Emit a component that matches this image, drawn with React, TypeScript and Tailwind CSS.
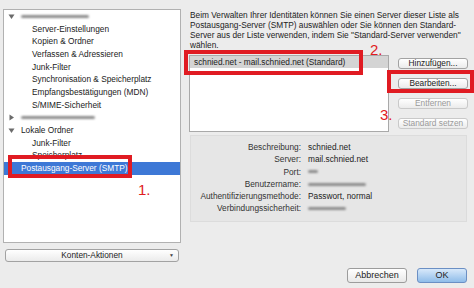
import React from "react"

type Row = {
  label?: string
  blur?: number
  level: 1 | 2
  toggle?: "open" | "closed"
  selected?: boolean
}

const rows: Row[] = [
  { level: 1, toggle: "open", blur: 68 },
  { level: 2, label: "Server-Einstellungen" },
  { level: 2, label: "Kopien & Ordner" },
  { level: 2, label: "Verfassen & Adressieren" },
  { level: 2, label: "Junk-Filter" },
  { level: 2, label: "Synchronisation & Speicherplatz" },
  { level: 2, label: "Empfangsbestätigungen (MDN)" },
  { level: 2, label: "S/MIME-Sicherheit" },
  { level: 1, toggle: "closed", blur: 74 },
  { level: 1, toggle: "open", label: "Lokale Ordner" },
  { level: 2, label: "Junk-Filter" },
  { level: 2, label: "Speicherplatz" },
  { level: 1, label: "Postausgang-Server (SMTP)", selected: true },
]

const details = [
  { label: "Beschreibung:", value: "schnied.net" },
  { label: "Server:", value: "mail.schnied.net" },
  { label: "Port:", blur: 10 },
  { label: "Benutzername:", blur: 58 },
  { label: "Authentifizierungsmethode:", value: "Passwort, normal" },
  { label: "Verbindungssicherheit:", blur: 38 },
]

function Triangle({ open }: { open: boolean }) {
  return (
    <svg width="7" height="7" viewBox="0 0 7 7" className="shrink-0">
      {open ? <path d="M0.5 1.5h6l-3 4.5z" fill="#6b6b6b" /> : <path d="M1.5 0.5v6l4.5-3z" fill="#6b6b6b" />}
    </svg>
  )
}

function Blurred({ width }: { width: number }) {
  return <div className="h-[3px] rounded-full bg-[#8c8c8c] blur-[1px]" style={{ width }} />
}

function MacButton({ label, disabled }: { label: string; disabled?: boolean }) {
  return (
    <div
      className={`h-[11px] w-[70px] rounded-[3px] border flex items-center justify-center bg-linear-to-b from-white to-[#ebebeb] ${
        disabled ? "border-[#c9c9c9] text-[#9a9a9a]" : "border-[#a2a2a2] text-[#222]"
      }`}
    >
      {label}
    </div>
  )
}

function Marker({ className, n }: { className: string; n: string }) {
  return <div className={`absolute text-[15px] leading-none text-[#e01b22] ${className}`}>{n}</div>
}

export default function App() {
  return (
    <div className="relative w-[474px] h-[288px] overflow-hidden bg-[#ececec] font-['Liberation_Sans',Arial,sans-serif] text-[8.3px] leading-none text-[#222]">
      <div className="flex">
        {/* account tree */}
        <div className="ml-[3px] mt-[9px] w-[178px] flex flex-col">
          <div className="h-[234px] border border-[#b1b1b1] bg-white">
            {rows.map((row, i) => (
              <div
                key={i}
                className={`h-[12.67px] flex items-center ${row.selected ? "bg-[#3d78d6] text-white" : ""}`}
              >
                {row.level === 1 ? (
                  <div className="flex items-center">
                    <div className="w-[17px] pl-[4px] flex">{row.toggle && <Triangle open={row.toggle === "open"} />}</div>
                    {row.blur ? <Blurred width={row.blur} /> : <span>{row.label}</span>}
                  </div>
                ) : (
                  <span className="pl-[28px]">{row.label}</span>
                )}
              </div>
            ))}
          </div>
          <div className="mt-[6px] mx-[2px] h-[13px] rounded-[3px] border border-[#a2a2a2] bg-linear-to-b from-white to-[#ebebeb] flex items-center relative">
            <span className="flex-1 text-center">Konten-Aktionen</span>
            <span className="absolute right-[4px] text-[5px] text-[#444]">▼</span>
          </div>
        </div>

        {/* server pane */}
        <div className="ml-[8px] mt-[10px] w-[280px] flex flex-col">
          <div className="pl-px leading-[10px] text-[#222]">
            <div className="whitespace-nowrap">Beim Verwalten Ihrer Identitäten können Sie einen Server dieser Liste als</div>
            <div className="whitespace-nowrap">Postausgang-Server (SMTP) auswählen oder Sie können den Standard-</div>
            <div className="whitespace-nowrap">Server aus der Liste verwenden, indem Sie "Standard-Server verwenden"</div>
            <div className="whitespace-nowrap">wählen.</div>
          </div>

          <div className="mt-[5px] flex">
            <div className="w-[200px] h-[77px] border border-[#a9a9a9] bg-white">
              <div className="h-[12px] bg-[#d4d4d4] flex items-center pl-[4px]">schnied.net - mail.schnied.net (Standard)</div>
            </div>
            <div className="ml-[9px] mt-[3px] flex flex-col gap-[9px]">
              <MacButton label="Hinzufügen..." />
              <MacButton label="Bearbeiten..." />
              <MacButton label="Entfernen" disabled />
              <MacButton label="Standard setzen" disabled />
            </div>
          </div>

          <div className="mt-[3px] ml-px w-[277px] h-[87px] border border-[#dcdcdc] bg-[#e6e6e6] pt-[5px]">
            {details.map((d) => (
              <div key={d.label} className="h-[12.3px] flex items-center">
                <div className="w-[110px] text-right text-[#333]">{d.label}</div>
                <div className="ml-[7px]">{d.value ? d.value : <Blurred width={d.blur ?? 20} />}</div>
              </div>
            ))}
          </div>

          <div className="mt-[46px] pr-[2px] flex justify-end gap-[10px]">
            <div className="h-[15px] w-[60px] rounded-[3px] border border-[#9c9c9c] bg-linear-to-b from-white to-[#e8e8e8] flex items-center justify-center text-[9px]">
              Abbrechen
            </div>
            <div className="h-[15px] w-[50px] rounded-[3px] border border-[#6b8fc4] bg-linear-to-b from-[#d8e9fa] to-[#8fbce9] flex items-center justify-center text-[9px]">
              OK
            </div>
          </div>
        </div>
      </div>

      {/* red annotations */}
      <div className="absolute left-[8px] top-[155px] w-[124px] h-[23px] border-[4px] border-[#e01b22]" />
      <Marker className="left-[138px] top-[182px]" n="1." />
      <div className="absolute left-[184px] top-[50px] w-[179px] h-[25px] border-[4px] border-[#e01b22]" />
      <Marker className="left-[370px] top-[42px]" n="2." />
      <div className="absolute left-[387px] top-[70px] w-[87px] h-[23px] border-[4px] border-[#e01b22]" />
      <Marker className="left-[380px] top-[107px]" n="3." />
    </div>
  )
}
